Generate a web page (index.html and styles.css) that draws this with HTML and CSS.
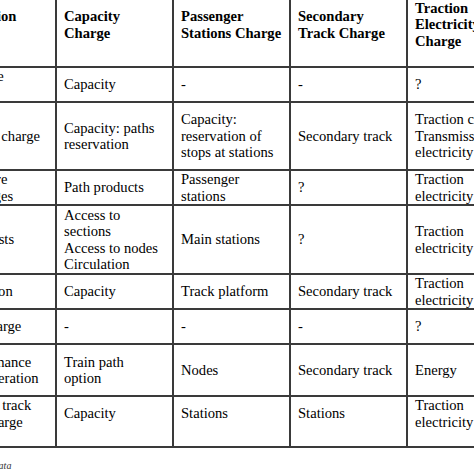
FILE: index.html
```html
<!DOCTYPE html>
<html lang="en">
<head>
<meta charset="utf-8">
<title>Charge classification</title>
<link rel="stylesheet" href="styles.css">
</head>
<body>
<div class="sheet">
  <table class="charges">
    <colgroup>
      <col class="c-name">
      <col class="c-type">
      <col class="c-type">
      <col class="c-type">
      <col class="c-type">
    </colgroup>
    <thead>
      <tr>
        <th>Denomination<br>of charge</th>
        <th>Capacity<br>Charge</th>
        <th>Passenger<br>Stations Charge</th>
        <th>Secondary<br>Track Charge</th>
        <th>Traction<br>Electricity<br>Charge</th>
      </tr>
    </thead>
    <tbody>
      <tr class="h35">
        <td>Track charge<br>per km</td>
        <td>Capacity</td>
        <td>-</td>
        <td>-</td>
        <td>?</td>
      </tr>
      <tr class="h68">
        <td>Reservation charge</td>
        <td>Capacity: paths<br>reservation</td>
        <td>Capacity:<br>reservation of<br>stops at stations</td>
        <td>Secondary track</td>
        <td>Traction current<br>Transmission<br>electricity</td>
      </tr>
      <tr class="h35">
        <td>Infrastructure<br>access charges</td>
        <td>Path products</td>
        <td>Passenger<br>stations</td>
        <td>?</td>
        <td>Traction<br>electricity</td>
      </tr>
      <tr class="h69">
        <td>Marginal costs</td>
        <td>Access to<br>sections<br>Access to nodes<br>Circulation</td>
        <td>Main stations</td>
        <td>?</td>
        <td>Traction<br>electricity</td>
      </tr>
      <tr class="h35">
        <td>Slot allocation</td>
        <td>Capacity</td>
        <td>Track platform</td>
        <td>Secondary track</td>
        <td>Traction<br>electricity</td>
      </tr>
      <tr class="h35">
        <td>Mark-up charge</td>
        <td>-</td>
        <td>-</td>
        <td>-</td>
        <td>?</td>
      </tr>
      <tr class="h52">
        <td>Path performance<br>extra remuneration</td>
        <td>Train path<br>option</td>
        <td>Nodes</td>
        <td>Secondary track</td>
        <td>Energy</td>
      </tr>
      <tr class="h51 trail">
        <td>Marshalling track<br>Terminal charge</td>
        <td>Capacity</td>
        <td>Stations</td>
        <td>Stations</td>
        <td>Traction<br>electricity</td>
      </tr>
    </tbody>
  </table>
  <p class="source">Source: IRG-Rail Data</p>
</div>
</body>
</html>
```

FILE: styles.css
```css
html, body {
  margin: 0;
  padding: 0;
  background: #ffffff;
  overflow: hidden;
}

body {
  width: 474px;
  height: 474px;
  font-family: "Liberation Serif", "Times New Roman", serif;
  color: #000000;
}

.sheet {
  margin-left: -81px;
  margin-top: -19px;
}

.charges {
  border-collapse: collapse;
  table-layout: fixed;
  width: 604px;
  font-size: 14.6px;
  line-height: 16.5px;
}

.charges .c-name {
  width: 136px;
}

.charges .c-type {
  width: 117px;
}

.charges th,
.charges td {
  border: 2px solid #3a3a3a;
  padding: 0 7px;
  text-align: left;
  vertical-align: middle;
  font-weight: normal;
}

.charges th {
  font-weight: bold;
  white-space: nowrap;
  height: 83px;
}

/* row heights: border-to-border pitch minus the 2px rule */
.charges .h35 td {
  height: 33px;
}

.charges .h51 td {
  height: 49px;
}

.charges .h52 td {
  height: 50px;
}

.charges .h68 td {
  height: 66px;
}

.charges .h69 td {
  height: 67px;
}

/* last row: each cell ends with an empty paragraph line */
.charges .trail td {
  height: 33px;
  padding-bottom: 16px;
}

.source {
  margin: 12px 0 0 0;
  font-size: 10px;
  line-height: 12px;
  font-style: italic;
  color: #333333;
}
```
